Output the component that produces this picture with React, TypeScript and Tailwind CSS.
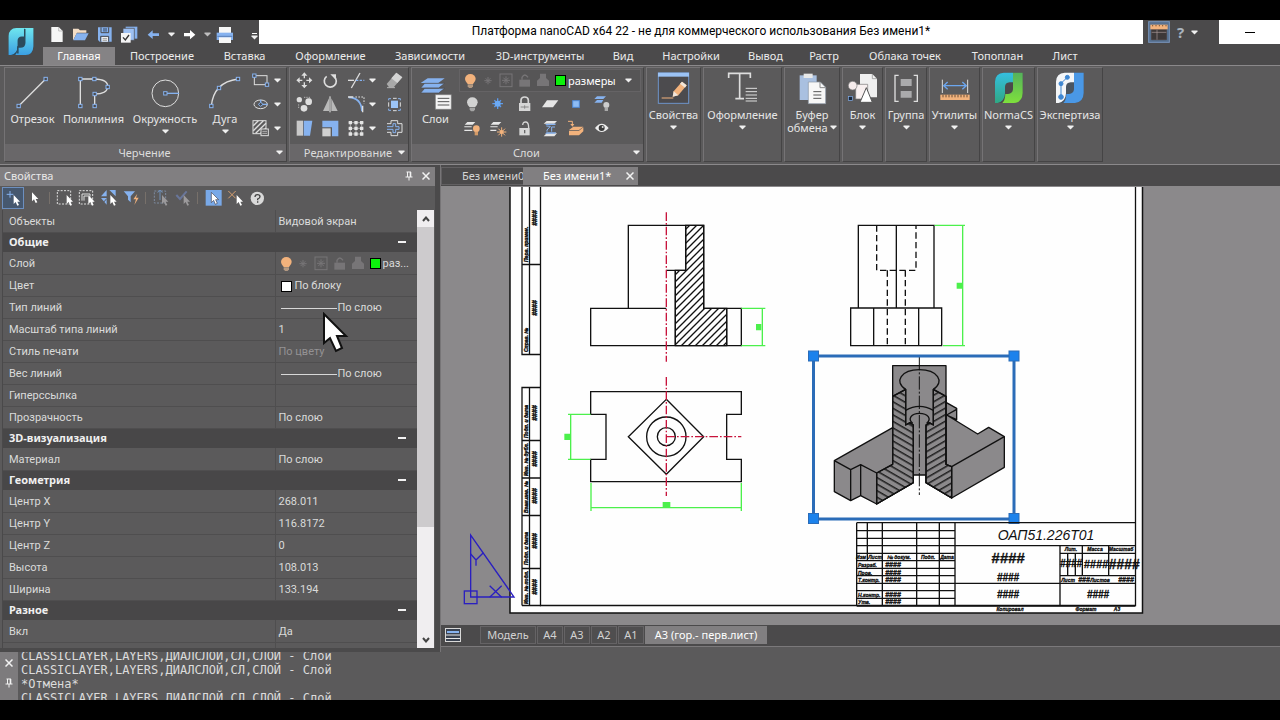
import React from "react";

type Box = [number, number, number, number];

const W = "#dedede";
const B = "#86b2ef";
const O = "#f2b27c";

/** Icon drawn on a grid three times finer than the screen. */
function Ic({ v, children, className = "" }: { v: Box; children: React.ReactNode; className?: string }) {
  return (
    <svg
      viewBox={v.join(" ")}
      width={v[2] / 3}
      height={v[3] / 3}
      className={"block shrink-0 " + className}
      fill="none"
      aria-hidden="true"
    >
      {children}
    </svg>
  );
}

const Arrow = ({ className = "" }: { className?: string }) => (
  <svg viewBox="0 0 7 5" width="7" height="5" className={"block shrink-0 " + className} aria-hidden="true">
    <path d="M0.5 0.5H6.5V1.5L3.5 4.5L0.5 1.5Z" fill="#f0f0f0" />
  </svg>
);

const Sq = ({ x, y }: { x: number; y: number }) => (
  <rect x={x - 5} y={y - 5} width="10" height="10" fill="#4a4a4c" stroke={B} strokeWidth="3" />
);

function Leaves({ left, right, hole, dots = false }: { left: string; right: string; hole: string; dots?: boolean }) {
  return (
    <>
      <path d="M462 267V203Q463 177 488 176H545V237Q544 265 519 267Z" fill={hole} />
      <path d="M462 267V203Q463 177 488 176H516V205H506Q492 206 492 219V238Q491 262 470 267Z" fill={left} />
      <path d="M516 176H545V237Q544 265 519 267H484Q492 260 493 240H501Q515 239 516 226Z" fill={right} />
      {dots && (
        <g stroke="#3f87d2" strokeWidth="3" fill="#3f87d2">
          <path d="M477 249V208L496 190" fill="none" />
          <circle cx="477" cy="249" r="7" />
          <circle cx="477" cy="209" r="6" />
          <circle cx="496" cy="190" r="6" />
        </g>
      )}
    </>
  );
}

/* ---------- header ---------- */

const quick: { label: string; box: string; icon: React.ReactNode }[] = [
  {
    label: "Новый",
    box: "w-6",
    icon: (
      <Ic v={[150, 37, 42, 51]}>
        <path d="M154 40H176L188 52V85H154Z" fill="#f6f6f6" />
        <path d="M176 40V52H188" stroke="#aaa" strokeWidth="2" />
      </Ic>
    ),
  },
  {
    label: "Открыть",
    box: "w-6",
    icon: (
      <Ic v={[213, 37, 54, 51]}>
        <path d="M216 78V45H232L237 50H256V57H228L217 79Z" fill="#f3ddc6" />
        <path d="M227 59H263L252 80H217Z" fill={B} />
      </Ic>
    ),
  },
  {
    label: "Сохранить",
    box: "w-6",
    icon: (
      <Ic v={[288, 37, 48, 51]}>
        <path d="M291 41H332V84H296L291 79Z" fill={B} />
        <path d="M300 41V57H323V41M299 84V68H323V84" stroke="#4b4a4b" strokeWidth="3" />
        <path d="M302 70H321V84H302Z" fill="#eee" />
        <path d="M305 75H318M305 80H318" stroke="#777" strokeWidth="2" />
        <path d="M306 43H318V54H306Z" fill="#5e7ba4" />
      </Ic>
    ),
  },
  {
    label: "Сохранить все",
    box: "w-6",
    icon: (
      <Ic v={[357, 37, 54, 51]}>
        <path d="M374 39H409V75H374Z" fill={B} />
        <path d="M366 44H400V80H366Z" fill="#9dc0f2" stroke="#4b4a4b" strokeWidth="2" />
        <path d="M360 58H389V87H360Z" fill="#f4f4f4" />
        <path d="M366 71L373 79L384 64" stroke="#333" strokeWidth="4" />
      </Ic>
    ),
  },
  {
    label: "Отменить",
    box: "w-6",
    icon: (
      <Ic v={[438, 45, 39, 36]}>
        <path d="M440 62L455 49V58H474V66H455V75Z" fill={B} />
      </Ic>
    ),
  },
  { label: "Список отмены", box: "w-3", icon: <Arrow /> },
  {
    label: "Повторить",
    box: "w-6",
    icon: (
      <Ic v={[543, 45, 39, 36]}>
        <path d="M580 62L564 48V57H546V67H564V76Z" fill="#fff" />
      </Ic>
    ),
  },
  { label: "Список повтора", box: "w-3", icon: <Arrow className="opacity-70" /> },
  {
    label: "Печать",
    box: "w-6",
    icon: (
      <Ic v={[639, 37, 54, 54]}>
        <path d="M648 40H684V58H648Z" fill="#f6f6f6" />
        <path d="M641 57H690V79H641Z" fill={B} />
        <path d="M648 71H684V88H648Z" fill="#f6f6f6" />
        <path d="M643 68H688" stroke="#5a7fb5" strokeWidth="3" />
      </Ic>
    ),
  },
];

const menuTabs: [string, string][] = [
  ["Главная", "w-[72px]"],
  ["Построение", "w-[94px]"],
  ["Вставка", "w-[71px]"],
  ["Оформление", "w-[101px]"],
  ["Зависимости", "w-[98px]"],
  ["3D-инструменты", "w-[122px]"],
  ["Вид", "w-[44px]"],
  ["Настройки", "w-[92px]"],
  ["Вывод", "w-[57px]"],
  ["Растр", "w-[60px]"],
  ["Облака точек", "w-[102px]"],
  ["Топоплан", "w-[83px]"],
  ["Лист", "w-[52px]"],
];

function Header() {
  return (
    <header className="flex h-[46px] shrink-0 border-b border-[#8b898b] bg-[#4b4a4b]">
      <button aria-label="Меню приложения" className="flex w-[43px] shrink-0 items-center justify-center pr-[1px] pb-[2px]">
        <svg viewBox="460 174 87 95" width="26" height="29" aria-hidden="true">
          <defs>
            <linearGradient id="lg" x1="0" y1="0" x2="0" y2="1">
              <stop offset="0" stopColor="#6fe6ee" />
              <stop offset="1" stopColor="#3b9fe3" />
            </linearGradient>
          </defs>
          <Leaves left="url(#lg)" right="url(#lg)" hole="#2c4a5c" />
          <path d="M516 180V226Q515 240 501 240H493V262" stroke="#2c4a5c" strokeWidth="5" fill="none" />
        </svg>
      </button>
      <div className="flex min-w-0 flex-1 flex-col">
        <div className="flex h-6 shrink-0">
          <div className="flex w-[216px] shrink-0 items-center pt-[5px] pr-px pl-[2px]">
            {quick.map((q) => (
              <button key={q.label} aria-label={q.label} className={"flex h-[18px] shrink-0 items-center justify-center " + q.box}>
                {q.icon}
              </button>
            ))}
            <button aria-label="Настроить панель" className="ml-auto flex flex-col items-center gap-px pt-1">
              <span className="h-px w-[5px] bg-white" />
              <Arrow />
            </button>
          </div>
          <h1 className="min-w-0 flex-1 truncate bg-white text-center font-[Roboto,sans-serif] text-xs leading-[22px] text-black">
            Платформа nanoCAD x64 22 - не для коммерческого использования Без имени1*
          </h1>
          <div className="flex w-[76px] shrink-0 items-center gap-[7px] pl-[5px]">
            <button aria-label="Интерфейс">
              <Ic v={[926, 22, 66, 66]}>
                <rect x="928" y="24" width="62" height="62" fill="#56708f" stroke="#7894ba" strokeWidth="3" />
                <path d="M937 47H981V78H937Z" fill="#3d3838" stroke="#4a4242" strokeWidth="3" />
                <path d="M933 33H985V47H933Z" fill={O} />
                <path d="M940 34V38M950 34V38M960 34V38M970 34V38M980 34V38" stroke="#7a5534" strokeWidth="3" />
                <path d="M953 48V78M937 56H981" stroke="#a99" strokeWidth="2" />
              </Ic>
            </button>
            <button aria-label="Справка" className="text-[15px] font-bold leading-4 text-[#a9b4bf]">?</button>
            <Arrow />
          </div>
          <div className="flex w-[61px] shrink-0 items-center justify-center bg-white">
            <button aria-label="Свернуть" className="flex h-5 w-6 items-center justify-center">
              <span className="h-px w-[10px] bg-black" />
            </button>
          </div>
        </div>
        <nav className="flex flex-1 items-end">
          {menuTabs.map(([t, w], i) => (
            <button
              key={t}
              className={
                "h-[18px] shrink-0 whitespace-nowrap text-center text-[11px] leading-[18px] " +
                (i === 0 ? "bg-[#858385] text-white " : "text-[#ececec] ") +
                w
              }
            >
              {t}
            </button>
          ))}
        </nav>
      </div>
    </header>
  );
}

/* ---------- ribbon ---------- */

function Group({ title, className, children }: { title?: string; className: string; children: React.ReactNode }) {
  return (
    <section
      className={
        "flex shrink-0 flex-col border-t border-r border-b border-l border-t-[#757375] border-r-[#454445] border-b-[#454445] border-l-[#757375] " +
        className
      }
    >
      <div className="flex flex-1">{children}</div>
      {title && (
        <footer className="flex h-[17px] items-center bg-[#696769] pl-2 text-[11px] leading-[17px] text-[#dcdcdc]">
          <span className="flex-1 text-center">{title}</span>
          <Arrow className="mr-[3px]" />
        </footer>
      )}
    </section>
  );
}

function Big({
  label,
  icon,
  className,
  arrow = false,
  low = false,
}: {
  label: string;
  icon: React.ReactNode;
  className: string;
  arrow?: boolean;
  low?: boolean;
}) {
  return (
    <button className={"flex shrink-0 flex-col items-center text-[11px] leading-[15px] text-[#e6e6e6] " + className}>
      <span className={low ? "flex h-[43px] items-end" : "flex h-[39px] items-center"}>{icon}</span>
      <span className="whitespace-nowrap">{label}</span>
      {arrow && <Arrow className="mt-[3px]" />}
    </button>
  );
}

function Small({ label, icon, arrow = false }: { label: string; icon: React.ReactNode; arrow?: boolean }) {
  return (
    <button aria-label={label} className="flex h-6 items-center justify-center gap-1">
      {icon}
      {arrow && <Arrow />}
    </button>
  );
}

const drawSmall = [
  <Ic v={[759, 176, 54, 45]}>
    <rect x="766" y="184" width="38" height="27" stroke={W} strokeWidth="3" />
    <Sq x={766} y={184} />
    <Sq x={804} y={211} />
  </Ic>,
  <Ic v={[759, 248, 54, 45]}>
    <ellipse cx="785" cy="270" rx="20" ry="13" stroke={W} strokeWidth="3" />
    <path d="M785 256V270H806" stroke={B} strokeWidth="4" />
    <path d="M785 264L792 270L785 276L778 270Z" fill="#4a4a4c" stroke={B} strokeWidth="3" />
  </Ic>,
  <Ic v={[759, 314, 54, 54]}>
    <rect x="762" y="319" width="39" height="39" stroke={W} strokeWidth="3" />
    <path d="M763 334L778 319M763 349L793 319M770 357L801 327M785 357L801 341" stroke={W} strokeWidth="4" />
    <rect x="786" y="344" width="22" height="20" fill="#5b5a5b" stroke={W} strokeWidth="3" />
    <path d="M790 351H804M790 357H804" stroke={W} strokeWidth="2" />
  </Ic>,
];

const editIcons: { n: string; a?: boolean; i: React.ReactNode }[] = [
  {
    n: "Переместить",
    i: (
      <Ic v={[888, 173, 51, 51]}>
        <path d="M913 174L922 184H904ZM913 222L922 212H904ZM889 198L899 189V207ZM937 198L927 189V207Z" fill={W} />
        <path d="M913 180V192M913 204V216M895 198H907M919 198H931" stroke={W} strokeWidth="4" />
      </Ic>
    ),
  },
  {
    n: "Повернуть",
    i: (
      <Ic v={[966, 173, 51, 51]}>
        <path d="M980 186A18 18 0 1 0 1003 187" stroke={W} strokeWidth="5" />
        <path d="M991 180H1008V197Z" fill={W} />
      </Ic>
    ),
  },
  {
    n: "Обрезать",
    a: true,
    i: (
      <Ic v={[1041, 173, 54, 51]}>
        <path d="M1054 221L1080 176" stroke={W} strokeWidth="4" />
        <path d="M1044 198H1062" stroke={W} strokeWidth="4" />
        <path d="M1068 198H1093" stroke={B} strokeWidth="4" strokeDasharray="7 4" />
      </Ic>
    ),
  },
  {
    n: "Стереть",
    i: (
      <Ic v={[1155, 173, 51, 51]}>
        <path d="M1186 175L1204 189L1178 219H1164L1157 209Z" fill="#a9a9a9" />
        <path d="M1186 175L1204 189L1189 206L1171 192Z" fill="#d4d4d4" />
        <path d="M1158 220H1182" stroke={W} strokeWidth="2" />
      </Ic>
    ),
  },
  {
    n: "Копировать",
    i: (
      <Ic v={[888, 245, 51, 51]}>
        <circle cx="898" cy="256" r="8" fill={W} />
        <circle cx="926" cy="262" r="10" fill={W} />
        <circle cx="912" cy="282" r="10" fill={W} />
        <path d="M912 249H930V254M896 270V284" stroke={W} strokeWidth="2" strokeDasharray="4 3" />
      </Ic>
    ),
  },
  {
    n: "Зеркало",
    i: (
      <Ic v={[966, 245, 51, 51]}>
        <path d="M987 252V290H969ZM994 252V290H1013Z" fill="#b9b9b9" />
        <path d="M990 246V294" stroke="#f0f0f0" strokeWidth="3" />
      </Ic>
    ),
  },
  {
    n: "Сопряжение",
    a: true,
    i: (
      <Ic v={[1041, 245, 54, 51]}>
        <path d="M1046 249Q1084 250 1086 291" stroke={B} strokeWidth="5" />
        <path d="M1044 248H1060M1088 274V294" stroke={W} strokeWidth="4" />
        <path d="M1066 248H1092V268" stroke={W} strokeWidth="3" strokeDasharray="5 4" />
      </Ic>
    ),
  },
  {
    n: "Масштаб",
    i: (
      <Ic v={[1155, 245, 51, 51]}>
        <rect x="1170" y="259" width="21" height="22" fill="#9cc4f6" />
        <path d="M1163 258V253H1170M1191 253H1198V258M1163 283V288H1170M1191 288H1198V283" stroke={B} strokeWidth="3" />
        <path d="M1163 264V277M1198 264V277M1176 252H1187M1176 289H1187" stroke={W} strokeWidth="3" />
      </Ic>
    ),
  },
  {
    n: "Растянуть",
    i: (
      <Ic v={[888, 317, 51, 51]}>
        <path d="M890 319H909V364H890Z" fill="#c9c9c9" />
        <path d="M911 319H937L930 364H911Z" fill={B} />
      </Ic>
    ),
  },
  {
    n: "Подобие",
    i: (
      <Ic v={[966, 317, 51, 51]}>
        <path d="M967 319H1015V366H996V339H967Z" fill={B} />
        <path d="M967 342H992V366H967Z" fill="#d0d0d0" />
      </Ic>
    ),
  },
  {
    n: "Массив",
    a: true,
    i: (
      <Ic v={[1041, 317, 54, 51]}>
        <path d="M1046 325H1090M1046 342H1090M1046 359H1090M1051 320V364M1068 320V364M1085 320V364" stroke="#a8a8a8" strokeWidth="3" />
        {[1051, 1068, 1085].map((x) => (
          <g key={x} fill="#e4e4e4">
            <path d={`M${x - 5} 320h10v10h-10zM${x - 5} 337h10v10h-10zM${x - 5} 354h10v10h-10z`} />
          </g>
        ))}
      </Ic>
    ),
  },
  {
    n: "Эквидистанта",
    i: (
      <Ic v={[1155, 317, 51, 51]}>
        <path d="M1158 328H1170V319H1190V328H1203V354H1190V364H1170V354H1158" stroke={W} strokeWidth="3" />
        <path d="M1158 337H1176V328H1184V337H1194V345H1184V355H1176V345H1158" stroke={B} strokeWidth="3" />
      </Ic>
    ),
  },
];

const Bulb = ({ color }: { color: string }) => (
  <>
    <path d="M198 192A16 15 0 1 1 230 192Q230 199 222 207H206Q198 199 198 192Z" fill={color} />
    <path d="M206 208H222V214L218 219H210L206 214Z" fill="#c9a98c" opacity=".8" />
  </>
);

function LayerFlags() {
  return (
    <>
      <Ic v={[252, 180, 36, 39]}>
        <path d="M270 189V211M259 200H281M263 193L277 207M277 193L263 207" stroke="#777577" strokeWidth="3" />
      </Ic>
      <Ic v={[300, 177, 42, 45]}>
        <rect x="303" y="180" width="36" height="38" stroke="#777577" strokeWidth="3" />
        <path d="M321 187V211M309 199H333M313 191L329 207M329 191L313 207" stroke="#777577" strokeWidth="3" />
      </Ic>
      <Ic v={[354, 177, 39, 45]}>
        <path d="M358 197H390V218H358Z" fill="#777577" />
        <path d="M366 197V190Q374 176 384 190" stroke="#777577" strokeWidth="4" />
      </Ic>
      <Ic v={[408, 177, 42, 45]}>
        <path d="M420 179H438V192L447 200V216H411V200L420 192Z" fill="#777577" />
      </Ic>
    </>
  );
}

const layerIcons: { n: string; i: React.ReactNode }[] = [
  {
    n: "Отключить слой",
    i: (
      <Ic v={[192, 176, 45, 45]}>
        <path d="M198 192A16 15 0 1 1 230 192Q230 199 222 207H206Q198 199 198 192Z" fill="#d2d2d2" />
        <path d="M206 209H222V214L218 219H210L206 214Z" fill="#a5a5a5" />
      </Ic>
    ),
  },
  {
    n: "Заморозить",
    i: (
      <Ic v={[270, 250, 42, 42]}>
        <path d="M290 254V286M274 270H306M280 260L300 280M300 260L280 280" stroke="#5d9bec" strokeWidth="4" />
        <circle cx="290" cy="270" r="9" fill="#6caaf4" />
      </Ic>
    ),
  },
  {
    n: "Блокировать",
    i: (
      <Ic v={[345, 246, 45, 48]}>
        <path d="M351 267H385V291H351Z" fill="#d6d6d6" />
        <path d="M357 267V258Q358 249 368 249Q378 249 379 258V267" stroke="#d6d6d6" strokeWidth="5" />
        <path d="M368 274V284M356 279H380" stroke="#888" strokeWidth="3" />
      </Ic>
    ),
  },
  {
    n: "Слой объекта",
    i: (
      <Ic v={[420, 252, 54, 36]}>
        <path d="M438 259H472L456 280H423Z" fill="#e6e6e6" />
      </Ic>
    ),
  },
  {
    n: "Изолировать",
    i: (
      <Ic v={[507, 252, 36, 36]}>
        <rect x="515" y="260" width="20" height="20" fill="#8dbcf5" stroke="#4f88d4" strokeWidth="3" />
      </Ic>
    ),
  },
  {
    n: "Слой и свет",
    i: (
      <Ic v={[576, 243, 54, 54]}>
        <path d="M588 247H615L607 255H580ZM588 258H607L602 266H580Z" fill={B} />
        <circle cx="616" cy="273" r="9" fill="#ccc" />
        <path d="M611 280H621V291H611Z" fill="#aaa" />
      </Ic>
    ),
  },
  {
    n: "Включить слои",
    i: (
      <Ic v={[186, 315, 54, 51]}>
        <path d="M199 321H223L215 329H191ZM190 334H212V337H190ZM190 344H214V348H190Z" fill="#e8e8e8" />
        <circle cx="226" cy="341" r="10" fill={O} />
        <path d="M221 350H231V361H221Z" fill="#d39a68" />
      </Ic>
    ),
  },
  {
    n: "Разморозить",
    i: (
      <Ic v={[264, 315, 54, 51]}>
        <path d="M277 321H301L293 329H269ZM268 334H290V337H268ZM268 344H286V348H268Z" fill="#e8e8e8" />
        <path d="M302 337V365M288 351H316M292 341L312 361M312 341L292 361" stroke={O} strokeWidth="3" />
        <circle cx="302" cy="351" r="6" fill={O} />
      </Ic>
    ),
  },
  {
    n: "Разблокировать",
    i: (
      <Ic v={[345, 315, 45, 51]}>
        <path d="M352 339H383V361H352Z" fill="#d6d6d6" />
        <path d="M362 330Q363 320 372 321Q380 322 380 339" stroke="#d6d6d6" strokeWidth="4" />
        <path d="M368 345V355" stroke="#666" strokeWidth="4" />
      </Ic>
    ),
  },
  {
    n: "Перенос на слой",
    i: (
      <Ic v={[423, 315, 51, 51]}>
        <path d="M437 318H468L460 326H428ZM437 355H468L460 364H428Z" fill="#e6e6e6" />
        <path d="M437 326H466L462 330H432ZM437 352H466L462 356H432Z" fill={B} />
        <path d="M436 333L448 334L438 345V350M452 350V336H462" stroke={B} strokeWidth="3" />
      </Ic>
    ),
  },
  {
    n: "Копия слоя",
    i: (
      <Ic v={[501, 315, 54, 54]}>
        <path d="M520 338H550L537 348H507ZM507 350H537L550 340V352L537 364H507Z" fill={O} />
        <path d="M504 322H517V331" stroke={O} strokeWidth="3" />
        <path d="M511 330H523L517 338Z" fill={O} />
      </Ic>
    ),
  },
  {
    n: "Просмотр",
    i: (
      <Ic v={[579, 324, 48, 36]}>
        <path d="M582 342Q602 316 623 342Q602 366 582 342Z" fill="#ededed" />
        <circle cx="602" cy="342" r="9" fill="#3a3a3a" />
        <circle cx="605" cy="339" r="3" fill="#ddd" />
      </Ic>
    ),
  },
];

function Ribbon() {
  return (
    <div className="flex h-[99px] shrink-0 gap-[2px] overflow-hidden border-b border-[#8b898b] bg-[#5b5a5b] pt-px pb-[2px] pl-1">
      <Group title="Черчение" className="w-[283px]">
        <Big
          label="Отрезок"
          className="w-[55px]"
          low
          icon={
            <Ic v={[45, 180, 105, 111]}>
              <path d="M56 276L137 195" stroke={W} strokeWidth="4" />
              <Sq x={56} y={276} />
              <Sq x={137} y={195} />
            </Ic>
          }
        />
        <Big
          label="Полилиния"
          className="w-[67px]"
          low
          icon={
            <Ic v={[225, 180, 108, 111]}>
              <path d="M238 276V195H280Q322 196 320 219Q318 240 281 240V276" stroke={W} strokeWidth="4" />
              <Sq x={238} y={195} />
              <Sq x={280} y={195} />
              <Sq x={320} y={219} />
              <Sq x={281} y={240} />
              <Sq x={238} y={276} />
              <Sq x={281} y={276} />
            </Ic>
          }
        />
        <Big
          label="Окружность"
          className="w-[76px]"
          low
          arrow
          icon={
            <Ic v={[450, 180, 93, 111]}>
              <circle cx="496" cy="238" r="40" stroke={W} strokeWidth="3" />
              <path d="M496 238H537" stroke={B} strokeWidth="4" />
              <Sq x={496} y={238} />
            </Ic>
          }
        />
        <Big
          label="Дуга"
          className="w-[44px]"
          low
          arrow
          icon={
            <Ic v={[627, 180, 102, 111]}>
              <path d="M637 276Q644 205 717 195" stroke={W} strokeWidth="4" />
              <Sq x={637} y={276} />
              <Sq x={660} y={222} />
              <Sq x={717} y={195} />
            </Ic>
          }
        />
        <div className="flex flex-1 flex-col">
          {["Прямоугольник", "Эллипс", "Штриховка"].map((n, i) => (
            <Small key={n} label={n} icon={drawSmall[i]} arrow />
          ))}
        </div>
      </Group>

      <Group title="Редактирование" className="w-[120px]">
        <div className="grid flex-1 grid-cols-[28px_24px_38px_28px] content-start">
          {editIcons.map((e) => (
            <Small key={e.n} label={e.n} icon={e.i} arrow={e.a} />
          ))}
        </div>
      </Group>

      <Group title="Слои" className="w-[233px]">
        <Big
          label="Слои"
          className="w-[47px]"
          low
          icon={
            <Ic v={[57, 186, 102, 102]}>
              <path d="M83 190H134L115 204H62Z" fill={B} />
              <path d="M74 205H134L116 219H62ZM74 220H134L116 234H62Z" fill={B} stroke="#4b4a4b" strokeWidth="2" />
              <path d="M106 239H154V283H106Z" fill="#f4f4f4" stroke="#777" strokeWidth="2" />
              <path d="M113 250H148M113 260H148M113 270H148" stroke="#555" strokeWidth="3" />
            </Ic>
          }
        />
        <div className="flex flex-1 flex-col">
          <label className="mt-px mr-[2px] flex h-[23px] items-center gap-[5px] border border-[#656365] bg-[#565556] pl-1">
            <Ic v={[195, 174, 39, 48]}>
              <Bulb color={O} />
            </Ic>
            <LayerFlags />
            <span className="-mr-[3px] h-[11px] w-[11px] shrink-0 border border-black bg-[#0df20d]" />
            <select
              aria-label="Текущий слой"
              className="min-w-0 flex-1 appearance-none bg-transparent text-[11px] leading-4 text-white outline-none"
            >
              <option>размеры</option>
            </select>
            <Arrow className="mr-2" />
          </label>
          <div className="grid grid-cols-[repeat(6,26px)]">
            {layerIcons.map((l) => (
              <Small key={l.n} label={l.n} icon={l.i} />
            ))}
          </div>
        </div>
      </Group>

      <Group className="w-[55px]">
        <Big
          label="Свойства"
          className="w-full"
          arrow
          icon={
            <Ic v={[768, 171, 99, 102]}>
              <rect x="772" y="177" width="91" height="91" fill="#4c4b4e" stroke="#6d94c9" strokeWidth="3" />
              <path d="M771 176H864V188H771Z" fill="#9cc3f5" />
              <path d="M818 232L843 203L857 214L832 244L815 248Z" fill={O} />
              <path d="M843 203L857 214L852 221L837 209ZM818 232L832 244L815 248Z" fill="#f2e6da" />
              <path d="M782 252H817" stroke={O} strokeWidth="3" />
            </Ic>
          }
        />
      </Group>
      <Group className="w-[79px]">
        <Big
          label="Оформление"
          className="w-full"
          arrow
          icon={
            <Ic v={[975, 174, 102, 99]}>
              <path d="M983 195V181H1048V195M1016 181V257M1003 257H1029" stroke={W} strokeWidth="5" />
              <path d="M1034 226H1068M1034 236H1068M1034 246H1068M1034 256H1068M1034 264H1068" stroke={W} strokeWidth="3" />
            </Ic>
          }
        />
      </Group>
      <Group className="w-[56px]">
        <button className="flex w-full flex-col items-center text-[11px] leading-[13px] text-[#e6e6e6]">
          <span className="flex h-10 items-center">
            <Ic v={[1191, 174, 87, 99]}>
              <path d="M1196 184H1247V258H1196Z" fill="#a9c0e0" />
              <path d="M1208 179H1235V192H1208Z" fill="#e8e8e8" />
              <path d="M1222 204H1258L1274 220V269H1222Z" fill="#f7f7f7" stroke="#8a94a3" strokeWidth="2" />
              <path d="M1257 204V221H1274" stroke="#888" strokeWidth="3" />
              <path d="M1237 233H1261M1237 243H1261M1237 253H1261" stroke="#555" strokeWidth="3" />
            </Ic>
          </span>
          <span>Буфер</span>
          <span className="flex items-center gap-[2px] whitespace-nowrap">
            обмена <Arrow />
          </span>
        </button>
      </Group>
      <Group className="w-[41px]">
        <Big
          label="Блок"
          className="w-full"
          arrow
          icon={
            <Ic v={[21, 177, 93, 90]}>
              <path d="M60 180H97L111 194V250H60Z" fill="#f0f0f0" />
              <path d="M97 180V194H111" stroke="#888" strokeWidth="2" />
              <path d="M47 211H83V255H47Z" fill="#f8f0f0" stroke="#777" strokeWidth="2" />
              <circle cx="38" cy="215" r="13" fill="#f6ecec" stroke="#777" strokeWidth="2" />
              <path d="M79 221L97 265H60Z" fill="#fff" stroke="#555" strokeWidth="3" />
              <rect x="25" y="247" width="12" height="12" fill="#16263c" stroke={B} strokeWidth="2" />
            </Ic>
          }
        />
      </Group>
      <Group className="w-[42px]">
        <Big
          label="Группа"
          className="w-full"
          arrow
          icon={
            <Ic v={[156, 177, 78, 90]}>
              <path d="M173 184H162V262H173M218 184H229V262H218" stroke={W} strokeWidth="4" />
              <path d="M179 195H212V216H179ZM179 231H212V251H179Z" fill="#aaaaac" />
            </Ic>
          }
        />
      </Group>
      <Group className="w-[51px]">
        <Big
          label="Утилиты"
          className="w-full"
          arrow
          icon={
            <Ic v={[294, 177, 96, 84]}>
              <path d="M304 194V234M380 194V234" stroke={W} strokeWidth="3" />
              <path d="M308 212H376M320 201L308 212L320 223M364 201L376 212L364 223" stroke="#6ca6ee" strokeWidth="4" />
              <path d="M298 239H386V255H298Z" fill={O} />
              <path d="M306 239V247M315 239V247M324 239V247M333 239V247M342 239V247M351 239V247M360 239V247M369 239V247M378 239V247" stroke="#6b4e36" strokeWidth="3" />
            </Ic>
          }
        />
      </Group>
      <Group className="w-[53px]">
        <Big
          label="NormaCS"
          className="w-full"
          arrow
          icon={
            <Ic v={[459, 174, 90, 96]}>
              <defs>
                <linearGradient id="nl" x1="0" y1="0" x2="0" y2="1">
                  <stop offset="0" stopColor="#35bfe0" />
                  <stop offset="1" stopColor="#2fa884" />
                </linearGradient>
                <linearGradient id="nr" x1="0" y1="0" x2="0" y2="1">
                  <stop offset="0" stopColor="#55b25c" />
                  <stop offset="1" stopColor="#7ee03c" />
                </linearGradient>
              </defs>
              <Leaves left="url(#nl)" right="url(#nr)" hole="#4b4a4b" />
            </Ic>
          }
        />
      </Group>
      <Group className="w-[66px]">
        <Big
          label="Экспертиза"
          className="w-full"
          arrow
          icon={
            <Ic v={[459, 174, 90, 96]}>
              <Leaves left="#f4f6f8" right="#4a98e6" hole="#4b5560" dots />
            </Ic>
          }
        />
      </Group>
    </div>
  );
}

/* ---------- properties ---------- */

const Cur = ({ x, y, fill = "#fff" }: { x: number; y: number; fill?: string }) => (
  <path d={`M${x} ${y}V${y + 27}L${x + 6} ${y + 21}L${x + 11} ${y + 32}L${x + 16} ${y + 30}L${x + 11} ${y + 20}H${x + 19}Z`} fill={fill} />
);

const tools: ({ n: string; i: React.ReactNode; cls?: string } | null)[] = [
  {
    n: "Добавить к выбору",
    cls: "border border-[#6c8fbf] bg-[#46586f]",
    i: (
      <Ic v={[12, 90, 54, 51]}>
        <path d="M30 93V113M20 103H40" stroke={B} strokeWidth="3" />
        <Cur x={41} y={105} />
      </Ic>
    ),
  },
  {
    n: "Выбор",
    i: (
      <Ic v={[84, 90, 42, 48]}>
        <Cur x={96} y={97} />
      </Ic>
    ),
  },
  null,
  {
    n: "Выбор рамкой",
    i: (
      <Ic v={[168, 87, 54, 54]}>
        <rect x="172" y="92" width="40" height="40" stroke={W} strokeWidth="3" strokeDasharray="6 4" />
        <Cur x={200} y={105} />
      </Ic>
    ),
  },
  {
    n: "Секущая рамка",
    i: (
      <Ic v={[234, 87, 54, 54]}>
        <rect x="238" y="92" width="40" height="40" stroke={W} strokeWidth="3" strokeDasharray="6 4" />
        <path d="M246 122V102H270V110M252 122V108H264" stroke={W} strokeWidth="3" />
        <Cur x={265} y={105} />
      </Ic>
    ),
  },
  {
    n: "Инвертировать",
    i: (
      <Ic v={[300, 87, 54, 54]}>
        <path d="M303 109L320 90V109ZM328 90H347V109ZM303 114H320V134Z" fill={B} />
        <path d="M324 90V134M303 136L320 116" stroke="#5b5a5b" strokeWidth="3" />
        <Cur x={331} y={105} />
      </Ic>
    ),
  },
  {
    n: "Фильтр",
    i: (
      <Ic v={[366, 87, 51, 51]}>
        <path d="M368 91H402L389 106V124L381 116V106Z" fill={B} />
        <path d="M409 98L397 115H405L400 132L413 110H405Z" fill={O} />
      </Ic>
    ),
  },
  null,
  {
    n: "Выбрать все",
    i: (
      <Ic v={[456, 87, 51, 54]}>
        <rect x="460" y="93" width="34" height="36" stroke="#7d8ba0" strokeWidth="3" strokeDasharray="6 4" />
        <path d="M477 120V90M470 98L477 90L484 98" stroke="#6f8fb8" strokeWidth="3" />
        <Cur x={483} y={105} fill="#9c9a9c" />
      </Ic>
    ),
  },
  {
    n: "Применить",
    i: (
      <Ic v={[525, 87, 51, 54]}>
        <path d="M529 105L540 117L560 94" stroke="#69769a" strokeWidth="6" />
        <Cur x={551} y={105} fill="#9c9a9c" />
      </Ic>
    ),
  },
  null,
  {
    n: "Режим выбора",
    i: (
      <Ic v={[612, 87, 51, 54]}>
        <rect x="614" y="90" width="48" height="47" fill="#79a9e8" />
        <path d="M631 97V128L638 121L643 133L649 130L644 119H653Z" fill="#fff" stroke="#445" strokeWidth="2" />
      </Ic>
    ),
  },
  {
    n: "Снять выбор",
    i: (
      <Ic v={[678, 87, 51, 54]}>
        <path d="M682 93L704 115M704 93L682 115" stroke="#d8a070" strokeWidth="3" />
        <Cur x={707} y={105} />
      </Ic>
    ),
  },
  {
    n: "Справка",
    i: (
      <Ic v={[747, 90, 45, 45]}>
        <circle cx="769" cy="112" r="20" fill="#d9d9d9" />
        <path d="M762 108Q762 101 769 101Q777 101 777 107Q777 111 770 114V118M770 121V125" stroke="#444" strokeWidth="4" />
      </Ic>
    ),
  },
];

const Line = () => <span className="h-px w-14 shrink-0 bg-[#d8d8d8]" />;

type Row = { head: string } | { k: string; v?: React.ReactNode; dim?: boolean };

const byLayer = (
  <span className="flex items-center gap-px pl-[2px]">
    <Line />
    По слою
  </span>
);

const rows: Row[] = [
  { k: "Объекты", v: "Видовой экран" },
  { head: "Общие" },
  {
    k: "Слой",
    v: (
      <span className="flex items-center gap-[5px]">
        <Ic v={[192, 171, 39, 51]}>
          <Bulb color={O} />
        </Ic>
        <LayerFlags />
        <span className="-mr-[3px] h-[11px] w-[11px] shrink-0 border border-black bg-[#0df20d]" />
        раз...
      </span>
    ),
  },
  {
    k: "Цвет",
    v: (
      <span className="flex items-center gap-[3px] pl-[2px]">
        <span className="h-[11px] w-[11px] shrink-0 border border-black bg-white" />
        По блоку
      </span>
    ),
  },
  { k: "Тип линий", v: byLayer },
  { k: "Масштаб типа линий", v: "1" },
  { k: "Стиль печати", v: "По цвету", dim: true },
  { k: "Вес линий", v: byLayer },
  { k: "Гиперссылка" },
  { k: "Прозрачность", v: "По слою" },
  { head: "3D-визуализация" },
  { k: "Материал", v: "По слою" },
  { head: "Геометрия" },
  { k: "Центр X", v: "268.011" },
  { k: "Центр Y", v: "116.8172" },
  { k: "Центр Z", v: "0" },
  { k: "Высота", v: "108.013" },
  { k: "Ширина", v: "133.194" },
  { head: "Разное" },
  { k: "Вкл", v: "Да" },
  { k: "" },
];

const Pin = () => (
  <svg viewBox="0 0 8 10" width="8" height="10" aria-hidden="true" fill="none" stroke="#f2f2f2">
    <path d="M2.5 1V6M1.5 1H6M0.5 6H7.5M4 6V9.5" />
    <path d="M5.5 1V6" strokeWidth="1.6" />
  </svg>
);

const Cross = () => (
  <svg viewBox="0 0 8 8" width="8" height="8" aria-hidden="true" stroke="#f2f2f2" strokeWidth="1.5">
    <path d="M0.5 0.5L7.5 7.5M7.5 0.5L0.5 7.5" />
  </svg>
);

function Properties() {
  return (
    <aside className="relative mt-[2px] mb-1 flex w-[435px] shrink-0 flex-col overflow-hidden bg-[#5b5a5b]">
      <header className="flex h-[19px] shrink-0 items-center gap-2 bg-[#817f81] pr-1 pb-[2px] pl-1 text-[11px] leading-[17px] text-[#e8e8e8]">
        <h2 className="flex-1">Свойства</h2>
        <button aria-label="Закрепить"><Pin /></button>
        <button aria-label="Закрыть панель" className="px-px"><Cross /></button>
      </header>
      <div className="flex h-6 shrink-0 items-center pl-[2px]">
        {tools.map((t, i) =>
          t ? (
            <button key={t.n} aria-label={t.n} className={"flex h-[22px] w-[22px] shrink-0 items-center justify-center " + (t.cls ?? "")}>
              {t.i}
            </button>
          ) : (
            <span key={i} className="mr-1 ml-[3px] h-3 w-px bg-[#77706a]" />
          )
        )}
      </div>
      <div className="flex min-h-0 flex-1 pr-px pl-[2px]">
        <div className="min-w-0 flex-1 overflow-hidden border-l border-[#4a494a]">
          <table className="w-full table-fixed border-collapse text-[11px] leading-[14px] text-[#dadada]">
            <colgroup>
              <col />
              <col className="w-[142px]" />
            </colgroup>
            <tbody className="font-[Roboto,sans-serif]">
              {rows.map((r, i) =>
                "head" in r ? (
                  <tr key={i} className="h-5 bg-[#484748] text-[#f0f0f0]">
                    <th colSpan={2} className="p-0 pr-[11px] pl-[6px] text-left">
                      <span className="flex items-center justify-between font-['Noto_Sans',sans-serif] font-bold">
                        {r.head}
                        <button aria-label={"Свернуть: " + r.head} className="flex h-3 items-center">
                          <span className="h-[2px] w-2 bg-[#f2f2f2]" />
                        </button>
                      </span>
                    </th>
                  </tr>
                ) : (
                  <tr key={i} className="h-[22px]">
                    <th scope="row" className="border-b border-[#4f4e4f] p-0 pt-[2px] pl-[6px] text-left font-normal">{r.k}</th>
                    <td className={"truncate border-b border-l border-[#4f4e4f] p-0 pt-[2px] pl-[3px] " + (r.dim ? "text-[#949294]" : "")}>{r.v}</td>
                  </tr>
                )
              )}
            </tbody>
          </table>
        </div>
        <div className="flex w-[17px] shrink-0 flex-col bg-[#f0eef0]">
          <button aria-label="Вверх" className="flex h-[17px] items-center justify-center">
            <svg viewBox="0 0 8 6" width="8" height="6" fill="none" stroke="#444" strokeWidth="2" aria-hidden="true"><path d="M1 5L4 1.5L7 5" /></svg>
          </button>
          <span className="h-[300px] bg-[#cdcbcd]" />
          <button aria-label="Вниз" className="mt-auto flex h-[17px] items-center justify-center">
            <svg viewBox="0 0 8 6" width="8" height="6" fill="none" stroke="#444" strokeWidth="2" aria-hidden="true"><path d="M1 1L4 4.5L7 1" /></svg>
          </button>
        </div>
      </div>
      <svg viewBox="0 0 27 42" width="27" height="42" className="pointer-events-none absolute top-[145px] left-[322px]" aria-hidden="true">
        <path d="M2 2V31L8 26L14 39L20 36L15 24H24Z" fill="#fff" stroke="#111" strokeWidth="2" />
      </svg>
    </aside>
  );
}

/* ---------- drawing ---------- */

const T = ({ x, y, s = 5, r, children, anchor = "middle" }: { x: number; y: number; s?: number; r?: boolean; children: string; anchor?: "middle" | "start" }) => (
  <text x={x} y={y} fontSize={s} textAnchor={anchor} transform={r ? `rotate(-90 ${x} ${y})` : undefined}>
    {children}
  </text>
);

const S = "scale(0.33333)";

function Drawing() {
  return (
    <svg viewBox="441 187 839 438" preserveAspectRatio="xMinYMin meet" className="block h-full w-full" fill="none" role="img" aria-label="Чертёж">
      <defs>
        <pattern id="h1" width="21" height="21" patternUnits="userSpaceOnUse">
          <path d="M-4 4L4 -4M-4 25L25 -4M17 25L25 17" stroke="#111" strokeWidth="4" />
        </pattern>
        <pattern id="h2" width="20" height="17" patternUnits="userSpaceOnUse" patternTransform="rotate(30)">
          <path d="M0 8H20" stroke="#111" strokeWidth="4" />
        </pattern>
        <pattern id="h3" width="20" height="17" patternUnits="userSpaceOnUse" patternTransform="rotate(-30)">
          <path d="M0 8H20" stroke="#111" strokeWidth="4" />
        </pattern>
      </defs>
      <rect x="441" y="187" width="839" height="438" fill="#8b898b" />
      <rect x="510" y="187" width="632" height="426" fill="#fefefe" />
      <path d="M510 187V613H1142.5V187" stroke="#111" strokeWidth="1.5" />
      <path d="M540.5 187V605.5H1135.5V187" stroke="#111" strokeWidth="1.3" />
      <path d="M522 187V354.5H541M529.5 187V354.5M522 264.5H541M522 605.5V387.5H541M529.5 387.5V605.5M522 440.5H541M522 478H541M522 515.5H541M522 568.5H541M522 605.5H541" stroke="#111" strokeWidth="1.3" />

      <g fill="#111" stroke="#111" strokeWidth=".4" fontFamily="'Liberation Sans',sans-serif" fontStyle="italic" fontWeight="700">
        <T x={528} y={262} r anchor="start">Перв. примен.</T>
        <T x={528} y={352} r anchor="start">Справ. №</T>
        <T x={528} y={438} r anchor="start">Подп. и дата</T>
        <T x={528} y={476} r anchor="start">Инв. № дубл.</T>
        <T x={528} y={513} r anchor="start">Взам.инв. №</T>
        <T x={528} y={565} r anchor="start">Подп. и дата</T>
        <T x={528} y={604} r anchor="start">Инв. № подл.</T>
        {[218, 308, 413, 459, 496, 541, 587].map((y) => (
          <T key={y} x={537} y={y} s={7} r>####</T>
        ))}
      </g>

      {/* front view */}
      <g transform={"translate(440 160) " + S} stroke="#111" strokeWidth="4">
        <path d="M737 196H791V445H860V557H706V331H737Z" fill="url(#h1)" />
        <path d="M565 445V196H791V445H904V557H452V445H679M679 331H737V196M706 331V557M860 445V557" />
        <path d="M679 157V605" stroke="#c8143c" strokeDasharray="26 6 5 6" />
        <g stroke="#4cf04c">
          <path d="M904 445H976M904 557H976M967 447V555" />
          <path d="M950 494H962V509H950Z" fill="#4cf04c" />
        </g>
      </g>

      {/* plan view */}
      <g transform={"translate(440 370) " + S} stroke="#111" strokeWidth="4">
        <path d="M452 65H904V133H860V268H904V335H452V268H498V133H452Z" />
        <path d="M679 88L791 200L679 313L565 200Z" />
        <circle cx="679" cy="200" r="59" />
        <circle cx="679" cy="200" r="27" />
        <path d="M679 21V378M679 200H904" stroke="#c8143c" strokeDasharray="26 6 5 6" />
        <g stroke="#4cf04c">
          <path d="M452 133H384M452 268H384M392 133V268M453 339V423M904 339V423M453 413H904" />
          <path d="M375 193H388V208H375ZM670 398H689V411H670Z" fill="#4cf04c" />
        </g>
        <g stroke="#2a1fc0">
          <path d="M92 495V681H222Z" />
          <rect x="73" y="663" width="38" height="38" />
          <path d="M92 552L108 570L130 548M108 570V587M149 647L185 682M185 647L149 682" />
        </g>
      </g>

      {/* side view */}
      <g transform={"translate(790 180) " + S} stroke="#111" strokeWidth="4">
        <path d="M205 384V136H432V384M319 136V384M182 384H455V497H182ZM251 384V497M386 384V497" />
        <path d="M260 136V271H378V136M292 271V497M346 271V497" strokeDasharray="19 10" />
        <g stroke="#4cf04c">
          <path d="M434 136H525M459 497H525M518 136V497" />
          <path d="M502 310H514V324H502Z" fill="#4cf04c" />
        </g>
      </g>

      {/* isometric cutaway */}
      <g transform={"translate(800 345) " + S} stroke="#111" strokeWidth="4" strokeLinejoin="round">
        <path d="M278 62H438V172L470 190V224L440 210L533 267L566 247L613 275V367L455 459L378 413V390H340V413L230 477L182 452L152 467L103 440V347L278 248Z" fill="#8b898b" />
        <path d="M278 154L317 133V240L330 233L340 240V413L230 477V384L278 358Z" fill="#8b898b" />
        <path d="M278 154L317 133V240L330 233L340 240V413L230 477V384L278 358Z" fill="url(#h2)" />
        <path d="M438 154L400 133V240L388 233L378 240V413L455 459V365L438 358Z" fill="#8b898b" />
        <path d="M438 154L400 133V240L388 233L378 240V413L455 459V365L438 358Z" fill="url(#h3)" />
        <path d="M103 347L152 374V467M152 374L182 359V452M182 359L230 384M455 365L613 275M438 172V358M440 210L470 193" />
        <path d="M317 133C280 110 305 74 358 74C412 74 436 110 400 133" />
        <path d="M317 196Q358 172 400 196M338 235C322 222 334 205 358 205C384 205 396 222 380 235" />
        <path d="M358 36V450" strokeDasharray="40 6 6 6" strokeWidth="3" />
      </g>

      <rect x="813.5" y="356" width="200.5" height="163" stroke="#2b6cb8" strokeWidth="3" />
      {[813.5, 1014].map((x) => [356, 518.5].map((y) => <rect key={x + "-" + y} x={x - 5} y={y - 5} width="10" height="10" fill="#1c82ec" stroke="#2b6cb8" />))}

      {/* title block */}
      <g transform={"translate(840 510) " + S} stroke="#111" strokeWidth="4">
        <path d="M50 38H886M50 38V288M50 62H345M50 85H345M50 107H345M50 130H345M50 152H345M50 175H345M50 197H345M50 220H345M50 242H345M50 265H345M50 288H886" />
        <path d="M82 38V152M127 38V288M230 38V288M298 38V288M345 38V288M345 107H886M345 220H886M660 107V288M727 107V197M806 107V197M660 130H886M660 197H886M683 130V197M706 130V197" />
      </g>
      <g fill="#111" fontFamily="'Liberation Sans',sans-serif" fontStyle="italic">
        <T x={1046} y={540} s={14}>ОАП51.226Т01</T>
        <g fontWeight="700" stroke="#111" strokeWidth=".3">
          <T x={861} y={559}>Изм</T>
          <T x={875} y={559}>Лист</T>
          <T x={899} y={559}>№ докум.</T>
          <T x={928} y={559}>Подп.</T>
          <T x={947} y={559}>Дата</T>
          <T x={858} y={567} anchor="start">Разраб.</T>
          <T x={858} y={575} anchor="start">Пров.</T>
          <T x={858} y={582} anchor="start">Т.контр.</T>
          <T x={858} y={597} anchor="start">Н.контр.</T>
          <T x={858} y={604} anchor="start">Утв.</T>
          {[567, 575, 582, 597, 604].map((y) => (
            <T key={y} x={893} y={y} s={7}>####</T>
          ))}
          <T x={1008} y={563} s={15}>####</T>
          <T x={1008} y={581} s={10}>####</T>
          <T x={1008} y={598} s={10}>####</T>
          <T x={1098} y={598} s={10}>####</T>
          <T x={1071} y={551}>Лит.</T>
          <T x={1095} y={551}>Масса</T>
          <T x={1121} y={551}>Масштаб</T>
          <T x={1071} y={567} s={10}>####</T>
          <T x={1096} y={568} s={11}>####</T>
          <T x={1124} y={569} s={14}>####</T>
          <T x={1068} y={582}>Лист</T>
          <T x={1084} y={582} s={7}>###</T>
          <T x={1100} y={582}>Листов</T>
          <T x={1126} y={582} s={7}>####</T>
          <T x={1010} y={611}>Копировал</T>
          <T x={1086} y={611}>Формат</T>
          <T x={1117} y={611}>А3</T>
        </g>
      </g>
    </svg>
  );
}

const sheets: [string, string][] = [
  ["Модель", "w-14"],
  ["A4", "w-[26px]"],
  ["A3", "w-[26px]"],
  ["A2", "w-[26px]"],
  ["A1", "w-[26px]"],
  ["A3 (гор.- перв.лист)", "w-[122px]"],
];

function Workspace() {
  return (
    <main className="flex min-w-0 flex-1 flex-col border-l border-[#777577] bg-[#4b4a4b]">
      <div className="flex h-[22px] shrink-0 items-end border-b border-[#8b898b] pt-[2px] pb-px text-[11px] leading-4">
        <button className="h-[18px] w-[82px] overflow-hidden border border-r-0 border-[#626062] pl-5 text-left whitespace-nowrap text-[#d6d6d6]">
          Без имени0
        </button>
        <div className="flex h-[18px] w-[115px] items-center justify-between bg-[#817f81] pr-1 pl-5 text-white">
          <button className="h-[18px]">Без имени1*</button>
          <button aria-label="Закрыть вкладку"><Cross /></button>
        </div>
      </div>
      <div className="min-h-0 flex-1 overflow-hidden bg-[#8b898b]">
        <Drawing />
      </div>
      <div className="flex h-[22px] shrink-0 items-start gap-px border-b border-[#7b797b] pt-px pl-1 text-[11px] leading-[15px]">
        <button aria-label="Список листов" className="mr-[18px] pt-[2px]">
          <svg viewBox="0 0 16 14" width="16" height="14" aria-hidden="true">
            <rect x=".5" y=".5" width="15" height="13" fill="#3a4250" stroke="#d8d8d8" />
            <path d="M2 4H14" stroke="#86b2ef" strokeWidth="2" />
            <path d="M1 7H15M1 10.5H15" stroke="#e6e6e6" />
          </svg>
        </button>
        {sheets.map(([s, w], i) => (
          <button
            key={s}
            className={
              "flex h-[18px] shrink-0 items-start justify-center border whitespace-nowrap " +
              (i === 5 ? "border-[#817f81] bg-[#817f81] text-white " : "border-[#656365] bg-[#4f4e4f] text-[#d2d2d2] ") +
              w
            }
          >
            {s}
          </button>
        ))}
      </div>
      <div className="h-[5px] shrink-0 bg-[#5b5a5b]" />
    </main>
  );
}

const log = [
  "CLASSICLAYER,LAYERS,ДИАЛСЛОЙ,СЛ,СЛОЙ - Слой",
  "CLASSICLAYER,LAYERS,ДИАЛСЛОЙ,СЛ,СЛОЙ - Слой",
  "*Отмена*",
  "CLASSICLAYER,LAYERS,ДИАЛСЛОЙ,СЛ,СЛОЙ - Слой",
];

export default function App() {
  return (
    <div className="flex h-screen flex-col overflow-hidden bg-[#4b4a4b] font-['Noto_Sans','Open_Sans',sans-serif]">
      <div className="h-5 shrink-0 bg-black" />
      <Header />
      <Ribbon />
      <div className="flex min-h-0 flex-1 gap-[5px]">
        <Properties />
        <Workspace />
      </div>
      <section aria-label="Командная строка" className="flex h-12 shrink-0 overflow-hidden bg-[#5b5a5b]">
        <div className="flex w-[18px] shrink-0 flex-col items-center gap-[11px] bg-[#7d7b7d] pt-[7px]">
          <button aria-label="Закрыть"><Cross /></button>
          <button aria-label="Закрепить строку"><Pin /></button>
        </div>
        <div className="flex flex-col justify-center pt-[2px] pl-[3px] font-['DejaVu_Sans_Mono',monospace] text-xs leading-[14px] whitespace-pre text-[#dcdcdc]">
          {log.map((l, i) => (
            <p key={i}>{l}</p>
          ))}
        </div>
      </section>
      <div className="h-5 shrink-0 bg-black" />
    </div>
  );
}
